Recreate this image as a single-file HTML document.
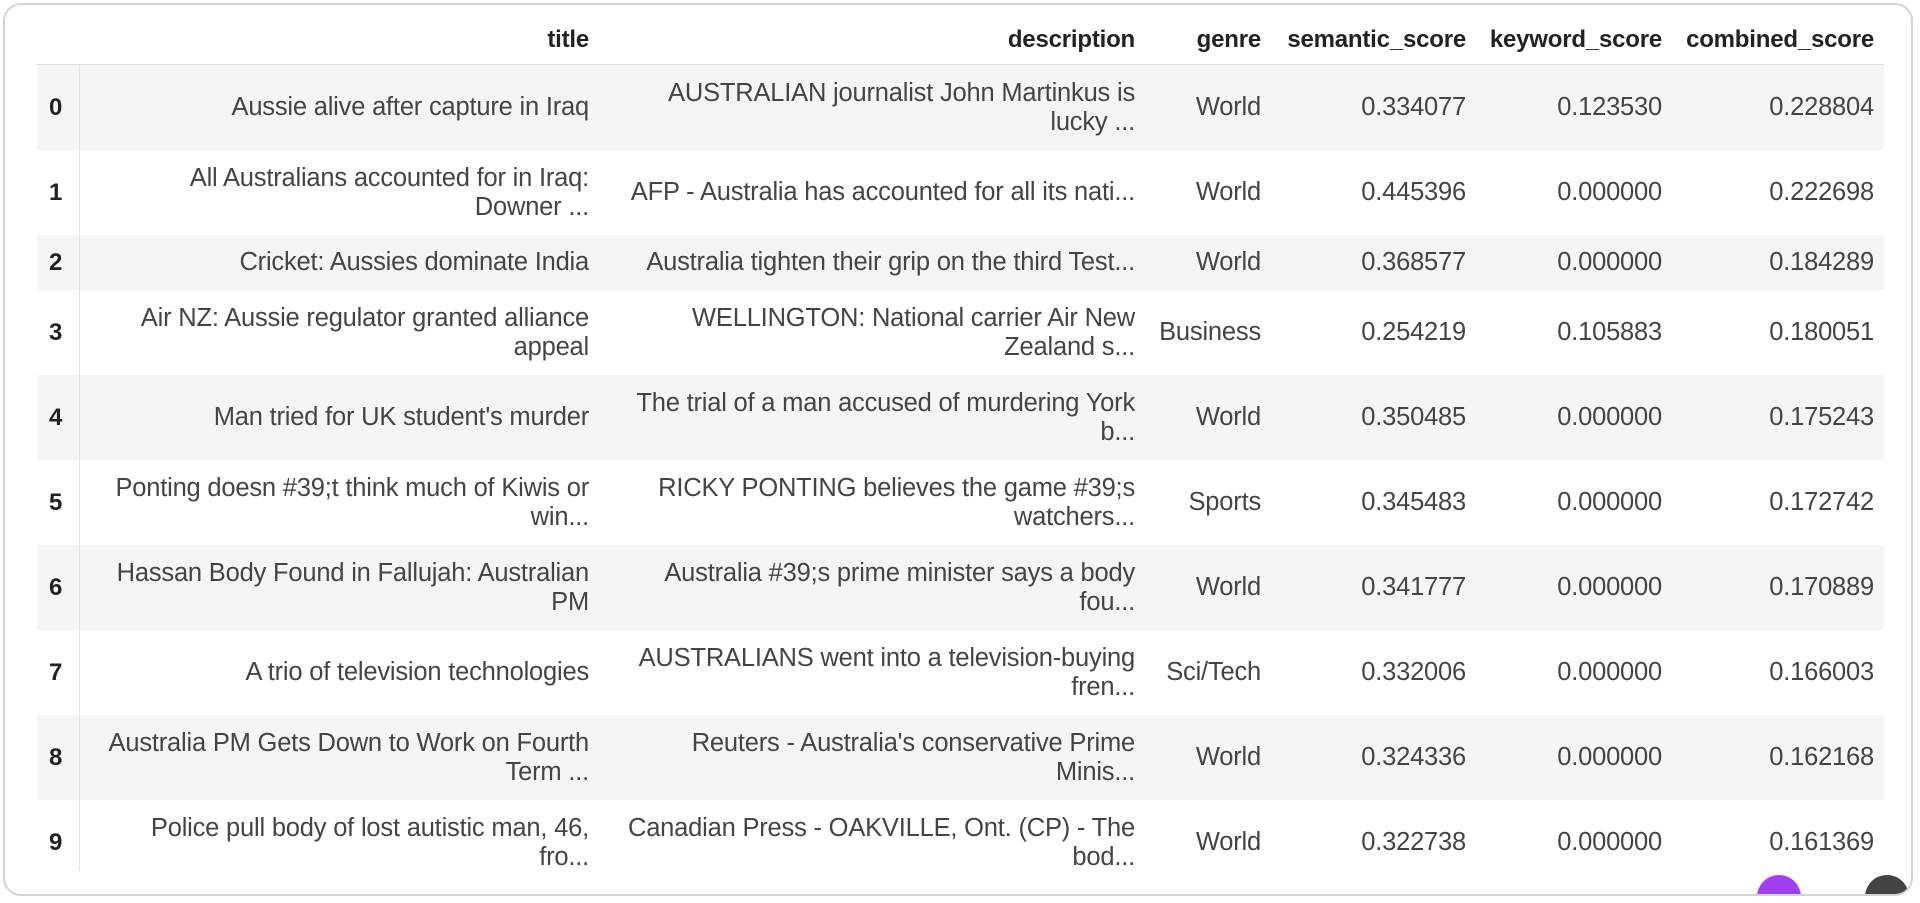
<!DOCTYPE html>
<html><head><meta charset="utf-8"><style>
html,body{margin:0;padding:0;background:#fff;width:1920px;height:903px;overflow:hidden}
.card{position:absolute;left:3px;top:3px;width:1910px;height:893px;border:2px solid #d4d4d4;border-radius:18px;box-sizing:border-box;background:#fff;overflow:hidden}
.wrap{position:absolute;left:32px;top:0;width:1856px;height:866px;overflow:hidden}
table{border-collapse:collapse;table-layout:fixed;font-family:"Liberation Sans",Arial,sans-serif;font-size:25.5px;color:#444;line-height:29px;letter-spacing:-0.2px}
td,th{text-align:right;white-space:nowrap;padding:0 10px;vertical-align:middle}
th{font-weight:bold;color:#222;height:50px;border-bottom:1.5px solid #ddd;padding-top:9px;font-size:24px}
td.i{font-weight:bold;color:#222;text-align:left;padding-left:12px;border-right:1.5px solid #e2e2e2;font-size:24px}
tr.s td{background:#f5f5f5}
tr.d td{height:85px}
tr.o td{height:55px}
.dot1{position:absolute;left:1752px;top:870px;width:44px;height:44px;border-radius:50%;background:#a040f0}
.dot2{position:absolute;left:1860px;top:870px;width:44px;height:44px;border-radius:50%;background:#444}
</style></head><body>
<div class="card">
<div class="wrap">
<table>
<colgroup><col style="width:42px"><col style="width:520px"><col style="width:546px"><col style="width:126px"><col style="width:205px"><col style="width:196px"><col style="width:212px"></colgroup>
<tr><th></th><th>title</th><th>description</th><th>genre</th><th>semantic_score</th><th>keyword_score</th><th>combined_score</th></tr>
<tr class="d s"><td class="i">0</td><td>Aussie alive after capture in Iraq</td><td>AUSTRALIAN journalist John Martinkus is<br>lucky ...</td><td>World</td><td>0.334077</td><td>0.123530</td><td>0.228804</td></tr>
<tr class="d"><td class="i">1</td><td>All Australians accounted for in Iraq:<br>Downer ...</td><td>AFP - Australia has accounted for all its nati...</td><td>World</td><td>0.445396</td><td>0.000000</td><td>0.222698</td></tr>
<tr class="o s"><td class="i">2</td><td>Cricket: Aussies dominate India</td><td>Australia tighten their grip on the third Test...</td><td>World</td><td>0.368577</td><td>0.000000</td><td>0.184289</td></tr>
<tr class="d"><td class="i">3</td><td>Air NZ: Aussie regulator granted alliance<br>appeal</td><td>WELLINGTON: National carrier Air New<br>Zealand s...</td><td>Business</td><td>0.254219</td><td>0.105883</td><td>0.180051</td></tr>
<tr class="d s"><td class="i">4</td><td>Man tried for UK student's murder</td><td>The trial of a man accused of murdering York<br>b...</td><td>World</td><td>0.350485</td><td>0.000000</td><td>0.175243</td></tr>
<tr class="d"><td class="i">5</td><td>Ponting doesn #39;t think much of Kiwis or<br>win...</td><td>RICKY PONTING believes the game #39;s<br>watchers...</td><td>Sports</td><td>0.345483</td><td>0.000000</td><td>0.172742</td></tr>
<tr class="d s"><td class="i">6</td><td>Hassan Body Found in Fallujah: Australian<br>PM</td><td>Australia #39;s prime minister says a body<br>fou...</td><td>World</td><td>0.341777</td><td>0.000000</td><td>0.170889</td></tr>
<tr class="d"><td class="i">7</td><td>A trio of television technologies</td><td>AUSTRALIANS went into a television-buying<br>fren...</td><td>Sci/Tech</td><td>0.332006</td><td>0.000000</td><td>0.166003</td></tr>
<tr class="d s"><td class="i">8</td><td>Australia PM Gets Down to Work on Fourth<br>Term ...</td><td>Reuters - Australia's conservative Prime<br>Minis...</td><td>World</td><td>0.324336</td><td>0.000000</td><td>0.162168</td></tr>
<tr class="d"><td class="i">9</td><td>Police pull body of lost autistic man, 46,<br>fro...</td><td>Canadian Press - OAKVILLE, Ont. (CP) - The<br>bod...</td><td>World</td><td>0.322738</td><td>0.000000</td><td>0.161369</td></tr>
</table>
</div>
<div class="dot1"></div><div class="dot2"></div>
</div>
</body></html>
